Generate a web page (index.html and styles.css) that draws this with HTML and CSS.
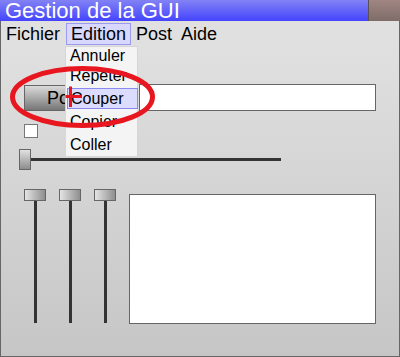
FILE: index.html
```html
<!DOCTYPE html>
<html lang="fr">
<head>
<meta charset="utf-8">
<title>Gestion de la GUI</title>
<link rel="stylesheet" href="styles.css">
</head>
<body>
<div class="window">
  <div class="titlebar">
    <span class="caption">Gestion de la GUI</span>
    <div class="close"></div>
  </div>
  <div class="frame">
    <div class="menubar">
      <span class="menu">Fichier</span>
      <span class="menu active">Edition</span>
      <span class="menu m-post">Post</span>
      <span class="menu m-aide">Aide</span>
    </div>
    <div class="panel">
      <div class="row1">
        <button class="btn">Poster</button>
        <div class="field"></div>
      </div>
      <div class="check"></div>
      <div class="hslider">
        <div class="hthumb"></div>
        <div class="htrack"></div>
      </div>
      <div class="row4">
        <div class="vslider"><div class="vthumb"></div><div class="vtrack"></div></div>
        <div class="vslider"><div class="vthumb"></div><div class="vtrack"></div></div>
        <div class="vslider"><div class="vthumb"></div><div class="vtrack"></div></div>
        <div class="textarea"></div>
      </div>
    </div>
  </div>
  <div class="dropdown">
    <div class="item i1">Annuler</div>
    <div class="item i2">Repeter</div>
    <div class="item sel">Couper</div>
    <div class="item i4">Copier</div>
    <div class="item i5">Coller</div>
  </div>
  <svg class="annot" width="400" height="357" viewBox="0 0 400 357">
    <ellipse cx="82.5" cy="97" rx="70" ry="28.5" fill="none" stroke="#e8161f" stroke-width="5"/>
    <line x1="70.5" y1="86.5" x2="70.5" y2="107" stroke="#e8161f" stroke-width="3"/>
    <line x1="65.5" y1="96.5" x2="82" y2="96.5" stroke="#e8161f" stroke-width="3"/>
  </svg>
</div>
</body>
</html>
```
FILE: styles.css
```css
* { box-sizing: border-box; }
html, body { margin: 0; padding: 0; }
body {
  width: 400px;
  height: 357px;
  overflow: hidden;
  font-family: "Liberation Sans", Arial, sans-serif;
  font-size: 18px;
  background: #c8c8c8;
}
.window {
  position: relative;
  width: 400px;
  height: 357px;
}
.titlebar {
  display: flex;
  height: 21px;
  background: linear-gradient(#8282f4, #4444ff);
}
.caption {
  flex: 1;
  color: #fff;
  font-family: "Liberation Sans", Arial, sans-serif;
  font-size: 22px;
  line-height: 21px;
  padding-left: 5px;
  white-space: nowrap;
}
.close {
  width: 32px;
  background: linear-gradient(#a08682, #7e6c69);
  border-left: 1px solid #5a5050;
}
.frame {
  height: 336px;
  border: 1px solid #666;
  border-top: none;
  display: flex;
  flex-direction: column;
}
.menubar {
  height: 25px;
  background: #e0e0e0;
  display: flex;
  gap: 1px;
  padding-top: 2px;
  font-size: 18px;
}
.menu {
  line-height: 20px;
  height: 22px;
  padding: 0 4px;
  border: 1px solid transparent;
  color: #000;
}
.menu.active {
  background: #d8d8ff;
  border-color: #9a9af0;
}
.m-post { margin-left: -1px; }
.m-aide { margin-left: -2px; }
.panel {
  flex: 1;
  background: linear-gradient(#e0e0e0, #c6c6c6);
  display: flex;
  flex-direction: column;
}
.row1 {
  display: flex;
  align-items: flex-start;
  margin-top: 38px;
}
.btn {
  margin: 1px 0 0 23px;
  width: 98px;
  height: 26px;
  padding: 0;
  border: 1px solid #666;
  background: linear-gradient(#dadada, #767676);
  font-family: "Liberation Sans", Arial, sans-serif;
  font-size: 18px;
  color: #000;
  text-align: center;
}
.field {
  margin-left: 17px;
  width: 237px;
  height: 27px;
  background: #fff;
  border: 1px solid #666;
}
.check {
  margin: 13px 0 0 23px;
  width: 14px;
  height: 14px;
  background: #fff;
  border: 1px solid #777;
}
.hslider {
  display: flex;
  align-items: center;
  margin-top: 11px;
}
.hthumb {
  margin-left: 18px;
  width: 12px;
  height: 21px;
  border: 1px solid #666;
  background: linear-gradient(#e2e2e2, #8c8c8c);
}
.htrack {
  width: 250px;
  height: 3px;
  background: #333;
}
.row4 {
  display: flex;
  align-items: flex-start;
  gap: 13px;
  padding-left: 23px;
  margin-top: 19px;
}
.vslider {
  width: 22px;
  display: flex;
  flex-direction: column;
  align-items: center;
}
.vthumb {
  width: 22px;
  height: 12px;
  border: 1px solid #666;
  background: linear-gradient(to right, #e4e4e4, #8e8e8e);
}
.vtrack {
  width: 3px;
  height: 122px;
  background: #333;
}
.textarea {
  margin-top: 5px;
  width: 247px;
  height: 130px;
  background: #fff;
  border: 1px solid #666;
}
.dropdown {
  position: absolute;
  left: 65px;
  top: 46px;
  width: 73px;
  height: 111px;
  background: #f4f4f4;
  border: 1px solid #d6d6d6;
  font-size: 16px;
  color: #000;
}
.item {
  padding-left: 4px;
  white-space: nowrap;
}
.i1 { line-height: 18px; }
.i2 { line-height: 18px; margin-top: 2px; }
.sel {
  margin: 3px -1px 0 1px;
  padding-left: 3px;
  line-height: 19px;
  background: #dcdcff;
  border: 1px solid #8a8aef;
}
.i4 { line-height: 23px; margin-top: 1px; }
.i5 { line-height: 23px; }
.annot {
  position: absolute;
  left: 0;
  top: 0;
  pointer-events: none;
}
```
